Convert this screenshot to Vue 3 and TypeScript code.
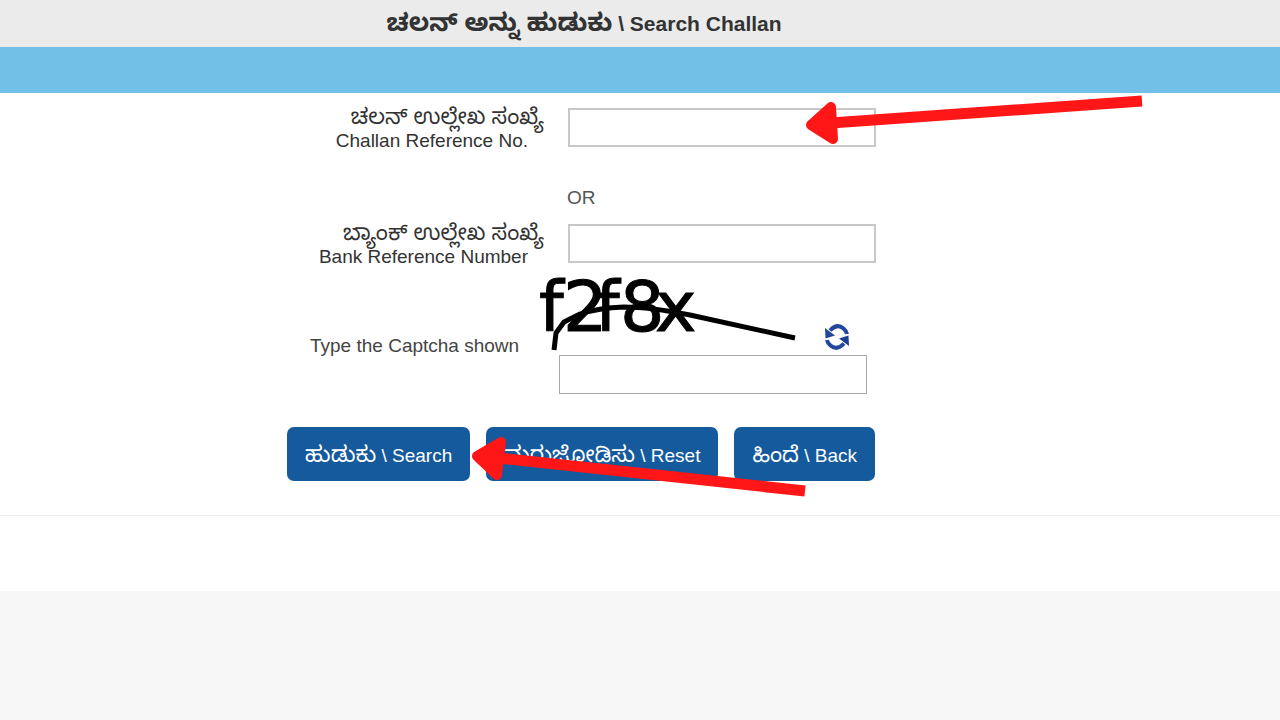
<script setup lang="ts">
import { ref } from 'vue'

interface Glyph {
  char: string
  x: number
}

const challanNo = ref('')
const bankNo = ref('')
const captcha = ref('')

const glyphs: Glyph[] = [
  { char: 'f', x: -1 },
  { char: '2', x: 23 },
  { char: 'f', x: 55 },
  { char: '8', x: 80 },
  { char: 'x', x: 115 },
]

function reset(): void {
  challanNo.value = ''
  bankNo.value = ''
  captcha.value = ''
}
</script>

<template>
  <div class="page">
    <header class="title-bar">
      <h1><span class="kn" lang="kn">ಚಲನ್ ಅನ್ನು ಹುಡುಕು</span> \ Search Challan</h1>
    </header>
    <div class="band"></div>
    <main class="content">
      <form class="form" @submit.prevent>
        <div class="row">
          <label class="label" for="challan">
            <span class="local" lang="kn">ಚಲನ್ ಉಲ್ಲೇಖ ಸಂಖ್ಯೆ</span>
            <span class="english">Challan Reference No.</span>
          </label>
          <input id="challan" v-model="challanNo" class="field" type="text" />
        </div>
        <p class="or">OR</p>
        <div class="row">
          <label class="label" for="bank">
            <span class="local" lang="kn">ಬ್ಯಾಂಕ್ ಉಲ್ಲೇಖ ಸಂಖ್ಯೆ</span>
            <span class="english">Bank Reference Number</span>
          </label>
          <input id="bank" v-model="bankNo" class="field" type="text" />
        </div>
        <div class="captcha-row">
          <label class="captcha-label" for="captcha">Type the Captcha shown</label>
          <div class="captcha-cell">
            <div class="captcha-top">
              <svg class="captcha-image" width="260" height="79" viewBox="0 0 260 79">
                <text v-for="(g, i) in glyphs" :key="i" :x="g.x" y="55">{{ g.char }}</text>
                <path d="M14 74 L16 57 L24 46 L40 38 Q58 32 84 31 Q110 31 150 39 L255 62" fill="none" stroke="#000" stroke-width="5" stroke-linejoin="round" />
              </svg>
              <button class="refresh" type="button" aria-label="Refresh captcha">
                <svg width="26" height="26" viewBox="0 0 26 26">
                  <path d="M6 6.500 Q13 -1 19.500 4.500 Q22.500 7 23 10" fill="none" stroke="#23479c" stroke-width="4" />
                  <path d="M1 4 L1.500 14.500 L11 11.500 Z" fill="#23479c" />
                  <path d="M20 19.500 Q13 27 6.500 21.500 Q3.500 19 3 16" fill="none" stroke="#23479c" stroke-width="4" />
                  <path d="M25 22 L24.500 11.500 L15 14.500 Z" fill="#1d3f8f" />
                </svg>
              </button>
            </div>
            <input id="captcha" v-model="captcha" class="field captcha-field" type="text" />
          </div>
        </div>
        <div class="actions">
          <button class="btn" type="submit"><span class="kn" lang="kn">ಹುಡುಕು</span> \ Search</button>
          <button class="btn" type="button" @click="reset"><span class="kn" lang="kn">ಮರುಜೋಡಿಸು</span> \ Reset</button>
          <button class="btn" type="button"><span class="kn" lang="kn">ಹಿಂದೆ</span> \ Back</button>
        </div>
        <svg class="arrows" width="870" height="410" viewBox="0 0 870 410" aria-hidden="true">
          <g fill="#ff1616" stroke="#ff1616" stroke-linejoin="round">
            <path d="M856 8 L545 30" stroke-width="11" />
            <path d="M525 32 L545 14 L547 46 Z" stroke-width="10" />
            <path d="M519 398 L212 365" stroke-width="11" />
            <path d="M191 363 L215 349 L211 382 Z" stroke-width="10" />
          </g>
        </svg>
      </form>
    </main>
    <div class="spacer"></div>
    <footer class="footer"></footer>
  </div>
</template>

<style>
body {
  margin: 0;
}
</style>

<style scoped>
.page {
  min-height: 100vh;
  display: flex;
  flex-direction: column;
  background: #fff;
  color: #333;
  font: 19px/22px "Liberation Sans", "Noto Sans Kannada", "Noto Sans", sans-serif;
  overflow: hidden;
}
.title-bar {
  background: #ebebeb;
  padding-right: 112px;
  text-align: center;
}
h1 {
  margin: 0;
  height: 47px;
  font-size: 21px;
  line-height: 45px;
}
h1 .kn {
  font-size: 25px;
}
.band {
  height: 46px;
  background: #72c0e8;
}
.content {
  display: flex;
  justify-content: center;
  padding: 15px 118px 34px 0;
  border-bottom: 1px solid #ececec;
}
.form {
  position: relative;
  width: 590px;
}
.row {
  display: flex;
  justify-content: flex-end;
  gap: 24px;
  height: 39px;
}
.label {
  display: flex;
  flex-direction: column;
  align-items: flex-end;
  white-space: nowrap;
}
.local {
  flex: none;
  height: 22px;
  font-size: 22px;
  line-height: 18px;
}
.english {
  flex: none;
  padding-right: 16px;
}
.field {
  box-sizing: border-box;
  width: 308px;
  height: 39px;
  padding: 0 10px;
  border: 2px solid #c8c8c8;
  background: #fff;
  font: inherit;
  color: inherit;
}
.or {
  margin: 0;
  padding: 40px 0 15px 281px;
  color: #555;
}
.captcha-row {
  display: flex;
  justify-content: space-between;
  margin-top: 13px;
}
.captcha-label {
  padding: 59px 0 0 24px;
  white-space: nowrap;
  color: #444;
}
.captcha-cell {
  width: 336px;
}
.captcha-top {
  display: flex;
  align-items: flex-end;
  gap: 24px;
}
.captcha-image {
  display: block;
  overflow: visible;
}
.captcha-image text {
  font: 70px "DejaVu Sans", sans-serif;
  fill: #000;
  stroke: #000;
  stroke-width: 1px;
}
.refresh {
  display: flex;
  margin: 0 0 5px;
  padding: 0;
  border: 0;
  background: none;
}
.captcha-field {
  display: block;
  margin-left: 19px;
  border: 1px solid #aaa;
}
.actions {
  display: flex;
  gap: 16px;
  margin-top: 33px;
  padding: 0 1px;
}
.btn {
  flex: 1 0 auto;
  height: 54px;
  padding: 2px 16px 0;
  border: 0;
  border-radius: 7px;
  background: #145a9c;
  color: #fff;
  font: inherit;
  white-space: nowrap;
}
.btn .kn {
  font-size: 22px;
}
.arrows {
  position: absolute;
  left: 0;
  top: -15px;
  pointer-events: none;
}
.spacer {
  height: 75px;
}
.footer {
  flex: 1;
  background: #f7f7f7;
}
</style>
